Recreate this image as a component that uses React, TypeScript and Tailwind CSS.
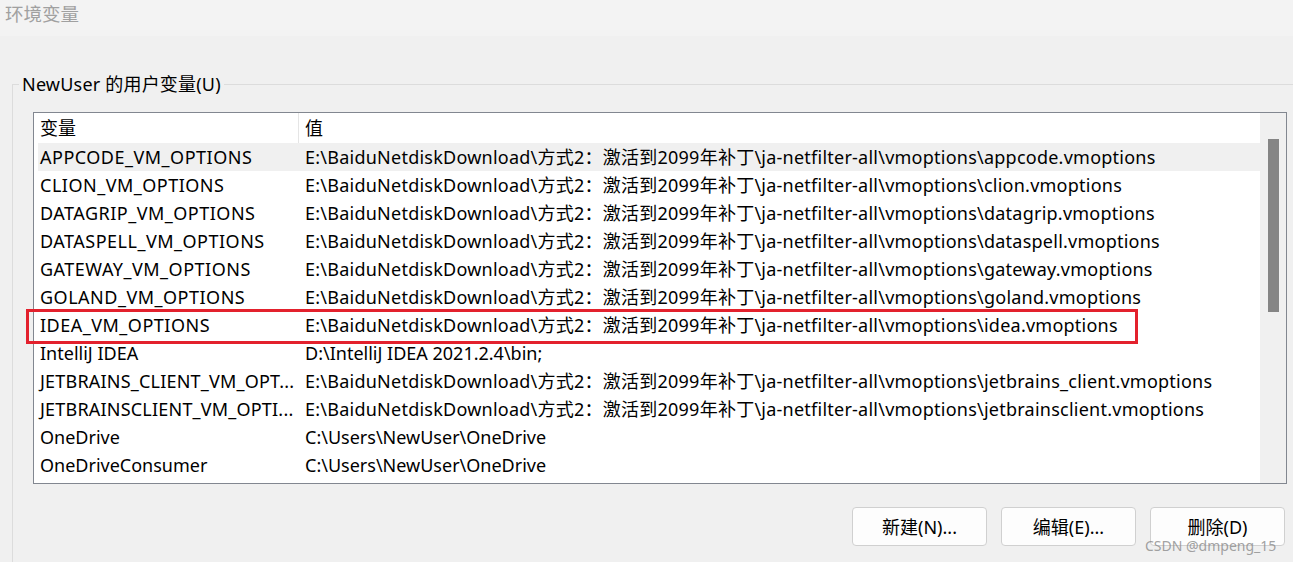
import React from 'react';

const base = 'E:\\BaiduNetdiskDownload\\方式2：激活到2099年补丁\\ja-netfilter-all\\vmoptions\\';

const rows = [
  { name: 'APPCODE_VM_OPTIONS', value: base + 'appcode.vmoptions' },
  { name: 'CLION_VM_OPTIONS', value: base + 'clion.vmoptions' },
  { name: 'DATAGRIP_VM_OPTIONS', value: base + 'datagrip.vmoptions' },
  { name: 'DATASPELL_VM_OPTIONS', value: base + 'dataspell.vmoptions' },
  { name: 'GATEWAY_VM_OPTIONS', value: base + 'gateway.vmoptions' },
  { name: 'GOLAND_VM_OPTIONS', value: base + 'goland.vmoptions' },
  { name: 'IDEA_VM_OPTIONS', value: base + 'idea.vmoptions' },
  { name: 'IntelliJ IDEA', value: 'D:\\IntelliJ IDEA 2021.2.4\\bin;' },
  { name: 'JETBRAINS_CLIENT_VM_OPT...', value: base + 'jetbrains_client.vmoptions' },
  { name: 'JETBRAINSCLIENT_VM_OPTI...', value: base + 'jetbrainsclient.vmoptions' },
  { name: 'OneDrive', value: 'C:\\Users\\NewUser\\OneDrive' },
  { name: 'OneDriveConsumer', value: 'C:\\Users\\NewUser\\OneDrive' },
];

const nameTracking = (n: string) => {
  if (n.endsWith('...')) return 'tracking-[0.2px]';
  if (n.includes('_')) return 'tracking-[0.5px]';
  return '';
};

const App: React.FC = () => {
  return (
    <div className="relative w-[1293px] h-[562px] overflow-hidden bg-[#f0f0f0] text-[18px] text-black font-['Noto_Sans','Noto_Sans_CJK_SC',sans-serif]">
      {/* Title bar */}
      <div className="h-[36px] bg-[#f3f3f3] pl-[5px] pt-[1px] text-[#a0a0a0] text-[18.5px] leading-[26px]">环境变量</div>

      {/* Group box */}
      <div className="relative mt-[48px] ml-[12px] h-[500px] border-l border-t border-[#dcdcdc]">
        <div className="absolute left-[6px] -top-[14px] bg-[#f0f0f0] px-[3px] leading-[26px] tracking-[0.2px]">NewUser 的用户变量(U)</div>

        <div className="mt-[27px] ml-[20px] w-[1254px] h-[372px] flex border border-[#828790] bg-white">
          <div className="flex-1 pl-[4px] flex flex-col">
            {/* Header */}
            <div className="h-[30px] flex items-center">
              <div className="w-[261px] h-full pl-[2px] flex items-center border-r border-[#e5e5e5]">变量</div>
              <div className="pl-[6px]">值</div>
            </div>
            {rows.map((r, i) => (
              <div
                key={r.name}
                className={`relative h-[28px] flex items-center whitespace-nowrap ${i === 0 ? 'bg-[#f0f0f0]' : ''}`}
              >
                <div className={`w-[261px] shrink-0 pl-[2px] ${nameTracking(r.name)}`}>{r.name}</div>
                <div className={`pl-[6px] overflow-hidden ${r.value.startsWith('E:') ? 'tracking-[0.24px]' : ''}`}>
                  {r.value}
                </div>
                {i === 6 && (
                  <div className="absolute -left-[12px] -top-[2px] w-[1112px] h-[35px] border-[3px] border-[#e3212d]" />
                )}
              </div>
            ))}
          </div>
          {/* Scrollbar */}
          <div className="w-[26px] bg-[#f0f0f0] flex justify-center">
            <div className="mt-[26px] w-[11px] h-[173px] bg-[#858585]" />
          </div>
        </div>

        {/* Buttons */}
        <div className="mt-[23px] pr-[8px] flex justify-end gap-[14px]">
          {['新建(N)...', '编辑(E)...', '删除(D)'].map((t) => (
            <button
              key={t}
              className="w-[135px] h-[39px] rounded-[4px] border border-[#d0d0d0] bg-[#fdfdfd] leading-none"
            >
              {t}
            </button>
          ))}
        </div>
      </div>

      <div className="absolute left-[1145px] top-[536px] text-[14px] text-[#8a8a8a]/80 leading-[20px]">CSDN @dmpeng_15</div>
    </div>
  );
};

export default App;
